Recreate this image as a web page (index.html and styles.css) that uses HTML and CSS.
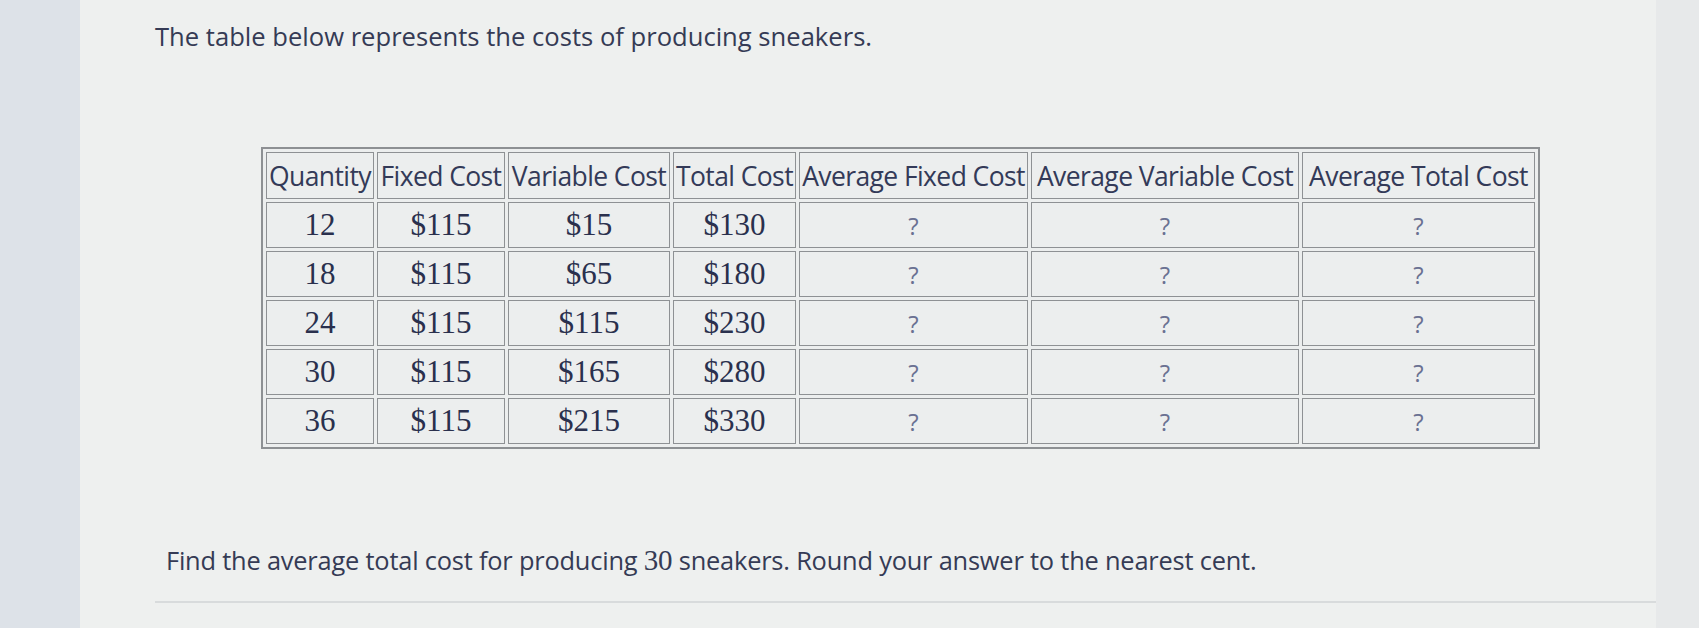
FILE: index.html
```html
<!DOCTYPE html>
<html lang="en">
<head>
    <meta charset="UTF-8">
    <title>Costs of producing sneakers</title>
    <link rel="stylesheet" href="styles.css">
</head>
<body>
    <div id="page">
        <div class="side"></div>
        <div id="panel">
            <p class="intro">The table below represents the costs of producing sneakers.</p>
            <table id="costs">
                <tr>
                    <th class="c1">Quantity</th>
                    <th class="c2">Fixed Cost</th>
                    <th class="c3">Variable Cost</th>
                    <th class="c4">Total Cost</th>
                    <th class="c5">Average Fixed Cost</th>
                    <th class="c6">Average Variable Cost</th>
                    <th class="c7">Average Total Cost</th>
                </tr>
                <tr>
                    <td class="num">12</td><td class="num">$115</td><td class="num">$15</td><td class="num">$130</td>
                    <td class="ask">?</td><td class="ask">?</td><td class="ask">?</td>
                </tr>
                <tr>
                    <td class="num">18</td><td class="num">$115</td><td class="num">$65</td><td class="num">$180</td>
                    <td class="ask">?</td><td class="ask">?</td><td class="ask">?</td>
                </tr>
                <tr>
                    <td class="num">24</td><td class="num">$115</td><td class="num">$115</td><td class="num">$230</td>
                    <td class="ask">?</td><td class="ask">?</td><td class="ask">?</td>
                </tr>
                <tr>
                    <td class="num">30</td><td class="num">$115</td><td class="num">$165</td><td class="num">$280</td>
                    <td class="ask">?</td><td class="ask">?</td><td class="ask">?</td>
                </tr>
                <tr>
                    <td class="num">36</td><td class="num">$115</td><td class="num">$215</td><td class="num">$330</td>
                    <td class="ask">?</td><td class="ask">?</td><td class="ask">?</td>
                </tr>
            </table>
            <p class="question">Find the average total cost for producing <span class="math">30</span> sneakers. Round your answer to the nearest cent.</p>
            <div class="rule"></div>
        </div>
        <div class="side right"></div>
    </div>
</body>
</html>
```

FILE: styles.css
```css
body, div, p, table{
    margin:0;
    padding:0;
}
body{
    background-color:#e4e7ea;
    font-family:"Open Sans", "Liberation Sans", sans-serif;
    color:#353b55;
}
#page{
    display:flex;
    height:628px;
}
.side{
    width:80px;
    background-color:#dde2e8;
}
.side.right{
    width:43px;
    background-color:#e7e9ea;
}
#panel{
    flex:1;
    background-color:#eef0ef;
    padding-left:75px;
}
.intro{
    font-size:25.6px;
    margin-top:20px;
    line-height:34px;
}
#costs{
    margin-top:93px;
    margin-left:106px;
    border:2px solid #8d9093;
    border-spacing:3px;
    background-color:#eceeee;
}
#costs th, #costs td{
    border:1.5px solid #8e9194;
    text-align:center;
    padding:0;
}
#costs th{
    font-weight:normal;
    font-size:26.5px;
    letter-spacing:-0.6px;
    height:45px;
    color:#333a58;
    white-space:nowrap;
}
#costs td{
    height:44px;
}
.c1{ width:106px; }
.c2{ width:126px; }
.c3{ width:160px; }
.c4{ width:121px; }
.c5{ width:227px; }
.c6{ width:266px; }
.c7{ width:231px; }
.num{
    font-family:"Liberation Serif", "DejaVu Serif", serif;
    font-size:31px;
    color:#2a304d;
}
.ask{
    font-size:24px;
    color:#6a7192;
}
.question{
    margin-top:94px;
    margin-left:11px;
    font-size:25.4px;
    line-height:34px;
    letter-spacing:-0.2px;
}
.math{
    font-family:"Liberation Serif", "DejaVu Serif", serif;
    font-size:29px;
}
.rule{
    margin-top:24px;
    border-top:2px solid #d8dbdc;
}
```
